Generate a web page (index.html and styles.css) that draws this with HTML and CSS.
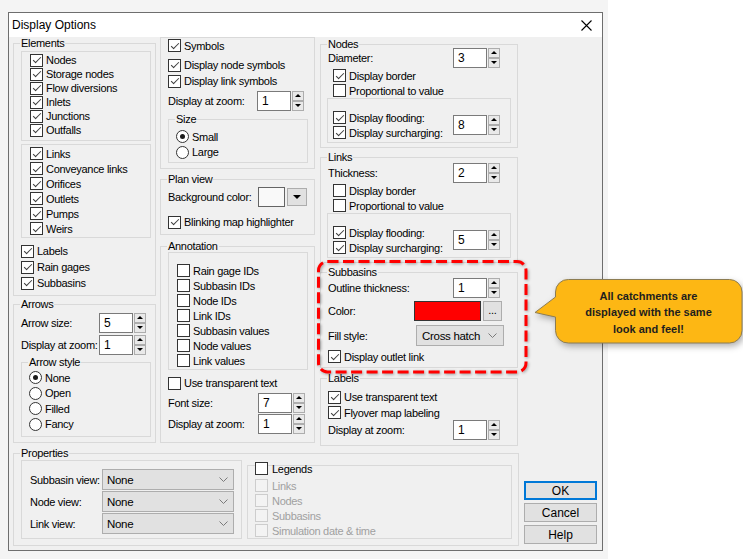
FILE: index.html
```html
<!DOCTYPE html>
<html lang="en">
<head>
    <meta charset="UTF-8">
    <meta name="viewport" content="width=device-width, initial-scale=1.0">
    <title>Display Options</title>
    <link rel="stylesheet" href="styles.css">
</head>
<body>
<div class="screen">
    <div class="window">
        <div class="titlebar">
            <span class="title">Display Options</span>
            <svg class="close" width="11" height="11" viewBox="0 0 11 11"><path d="M0.5 0.5L10.5 10.5M10.5 0.5L0.5 10.5" stroke="#000" stroke-width="1.1"/></svg>
        </div>
        <div class="dlg">
            <div class="top">
                <!-- left column -->
                <div class="col col1">
                    <fieldset class="grp elements">
                        <legend>Elements</legend>
                        <div class="gb">
                            <div class="box box-nodes">
                                <div class="ck"><span class="cb on"></span>Nodes</div>
                                <div class="ck"><span class="cb on"></span>Storage nodes</div>
                                <div class="ck"><span class="cb on"></span>Flow diversions</div>
                                <div class="ck"><span class="cb on"></span>Inlets</div>
                                <div class="ck"><span class="cb on"></span>Junctions</div>
                                <div class="ck"><span class="cb on"></span>Outfalls</div>
                            </div>
                            <div class="box box-links">
                                <div class="ck"><span class="cb on"></span>Links</div>
                                <div class="ck"><span class="cb on"></span>Conveyance links</div>
                                <div class="ck"><span class="cb on"></span>Orifices</div>
                                <div class="ck"><span class="cb on"></span>Outlets</div>
                                <div class="ck"><span class="cb on"></span>Pumps</div>
                                <div class="ck"><span class="cb on"></span>Weirs</div>
                            </div>
                            <div class="misc">
                                <div class="ck"><span class="cb on"></span>Labels</div>
                                <div class="ck"><span class="cb on"></span>Rain gages</div>
                                <div class="ck"><span class="cb on"></span>Subbasins</div>
                            </div>
                        </div>
                    </fieldset>
                    <fieldset class="grp arrows">
                        <legend>Arrows</legend>
                        <div class="gb">
                            <div class="frow"><span class="lab lab-arrow">Arrow size:</span><span class="num">5</span><span class="spin"><i class="up"></i><i class="dn"></i></span></div>
                            <div class="frow arrow-zoom"><span class="lab lab-arrow">Display at zoom:</span><span class="num">1</span><span class="spin"><i class="up"></i><i class="dn"></i></span></div>
                            <fieldset class="grp arrowstyle">
                                <legend>Arrow style</legend>
                                <div class="gb">
                                    <div class="rd"><span class="rb on"></span>None</div>
                                    <div class="rd"><span class="rb"></span>Open</div>
                                    <div class="rd"><span class="rb"></span>Filled</div>
                                    <div class="rd"><span class="rb"></span>Fancy</div>
                                </div>
                            </fieldset>
                        </div>
                    </fieldset>
                </div>

                <!-- middle column -->
                <div class="col col2">
                    <div class="box symbols">
                        <div class="ck sym1"><span class="cb on"></span>Symbols</div>
                        <div class="ck sym2"><span class="cb on"></span>Display node symbols</div>
                        <div class="ck sym3"><span class="cb on"></span>Display link symbols</div>
                        <div class="frow sym-zoom"><span class="lab lab-mid">Display at zoom:</span><span class="num">1</span><span class="spin"><i class="up"></i><i class="dn"></i></span></div>
                        <fieldset class="grp size">
                            <legend>Size</legend>
                            <div class="gb">
                                <div class="rd"><span class="rb on"></span>Small</div>
                                <div class="rd"><span class="rb"></span>Large</div>
                            </div>
                        </fieldset>
                    </div>
                    <fieldset class="grp planview">
                        <legend>Plan view</legend>
                        <div class="gb">
                            <div class="frow"><span class="lab lab-bg">Background color:</span><span class="swatch"></span><span class="ddbtn"></span></div>
                            <div class="ck blink"><span class="cb on"></span>Blinking map highlighter</div>
                        </div>
                    </fieldset>
                    <fieldset class="grp annotation">
                        <legend>Annotation</legend>
                        <div class="gb">
                            <div class="box box-annot">
                                <div class="ck"><span class="cb"></span>Rain gage IDs</div>
                                <div class="ck"><span class="cb"></span>Subbasin IDs</div>
                                <div class="ck"><span class="cb"></span>Node IDs</div>
                                <div class="ck"><span class="cb"></span>Link IDs</div>
                                <div class="ck"><span class="cb"></span>Subbasin values</div>
                                <div class="ck"><span class="cb"></span>Node values</div>
                                <div class="ck"><span class="cb"></span>Link values</div>
                            </div>
                            <div class="ck transp"><span class="cb"></span>Use transparent text</div>
                            <div class="frow font-row"><span class="lab lab-bg">Font size:</span><span class="num">7</span><span class="spin"><i class="up"></i><i class="dn"></i></span></div>
                            <div class="frow annot-zoom"><span class="lab lab-bg">Display at zoom:</span><span class="num">1</span><span class="spin"><i class="up"></i><i class="dn"></i></span></div>
                        </div>
                    </fieldset>
                </div>

                <!-- right column -->
                <div class="col col3">
                    <fieldset class="grp nodes">
                        <legend>Nodes</legend>
                        <div class="gb">
                            <div class="frow first"><span class="lab lab-right">Diameter:</span><span class="num">3</span><span class="spin"><i class="up"></i><i class="dn"></i></span></div>
                            <div class="ck indent"><span class="cb on"></span>Display border</div>
                            <div class="ck indent"><span class="cb"></span>Proportional to value</div>
                            <div class="box box-flood">
                                <div class="cks">
                                    <div class="ck"><span class="cb on"></span>Display flooding:</div>
                                    <div class="ck"><span class="cb on"></span>Display surcharging:</div>
                                </div>
                                <span class="num">8</span><span class="spin"><i class="up"></i><i class="dn"></i></span>
                            </div>
                        </div>
                    </fieldset>
                    <fieldset class="grp links">
                        <legend>Links</legend>
                        <div class="gb">
                            <div class="frow first"><span class="lab lab-right">Thickness:</span><span class="num">2</span><span class="spin"><i class="up"></i><i class="dn"></i></span></div>
                            <div class="ck indent"><span class="cb"></span>Display border</div>
                            <div class="ck indent"><span class="cb"></span>Proportional to value</div>
                            <div class="box box-flood">
                                <div class="cks">
                                    <div class="ck"><span class="cb on"></span>Display flooding:</div>
                                    <div class="ck"><span class="cb on"></span>Display surcharging:</div>
                                </div>
                                <span class="num">5</span><span class="spin"><i class="up"></i><i class="dn"></i></span>
                            </div>
                        </div>
                    </fieldset>
                    <fieldset class="grp subbasins">
                        <legend>Subbasins</legend>
                        <div class="gb">
                            <div class="frow first"><span class="lab lab-right">Outline thickness:</span><span class="num">1</span><span class="spin"><i class="up"></i><i class="dn"></i></span></div>
                            <div class="frow color-row"><span class="lab lab-color">Color:</span><span class="redbox"></span><span class="dots">...</span></div>
                            <div class="frow fill-row"><span class="lab lab-fill">Fill style:</span><span class="sel sel-fill">Cross hatch<svg class="chev" width="9" height="5" viewBox="0 0 9 5"><path d="M0.5 0.5L4.5 4.5L8.5 0.5" fill="none" stroke="#7a7a7a"/></svg></span></div>
                            <div class="ck outlet"><span class="cb on"></span>Display outlet link</div>
                        </div>
                    </fieldset>
                    <fieldset class="grp labels">
                        <legend>Labels</legend>
                        <div class="gb">
                            <div class="ck lab1"><span class="cb on"></span>Use transparent text</div>
                            <div class="ck lab2"><span class="cb on"></span>Flyover map labeling</div>
                            <div class="frow"><span class="lab lab-right">Display at zoom:</span><span class="num">1</span><span class="spin"><i class="up"></i><i class="dn"></i></span></div>
                        </div>
                    </fieldset>
                </div>
            </div>

            <div class="bottom">
                <fieldset class="grp properties">
                    <legend>Properties</legend>
                    <div class="gb">
                        <div class="box pbox">
                            <div class="prow"><span class="lab lab-prop">Subbasin view:</span><span class="sel sel-prop">None<svg class="chev" width="9" height="5" viewBox="0 0 9 5"><path d="M0.5 0.5L4.5 4.5L8.5 0.5" fill="none" stroke="#7a7a7a"/></svg></span></div>
                            <div class="prow"><span class="lab lab-prop">Node view:</span><span class="sel sel-prop">None<svg class="chev" width="9" height="5" viewBox="0 0 9 5"><path d="M0.5 0.5L4.5 4.5L8.5 0.5" fill="none" stroke="#7a7a7a"/></svg></span></div>
                            <div class="prow"><span class="lab lab-prop">Link view:</span><span class="sel sel-prop">None<svg class="chev" width="9" height="5" viewBox="0 0 9 5"><path d="M0.5 0.5L4.5 4.5L8.5 0.5" fill="none" stroke="#7a7a7a"/></svg></span></div>
                        </div>
                        <div class="box lgbox">
                            <div class="ck lg-head"><span class="cb"></span>Legends</div>
                            <div class="ck off lg-first"><span class="cb"></span>Links</div>
                            <div class="ck off"><span class="cb"></span>Nodes</div>
                            <div class="ck off"><span class="cb"></span>Subbasins</div>
                            <div class="ck off"><span class="cb"></span>Simulation date &amp; time</div>
                        </div>
                    </div>
                </fieldset>
                <div class="btns">
                    <button class="btn default">OK</button>
                    <button class="btn">Cancel</button>
                    <button class="btn">Help</button>
                </div>
            </div>
        </div>
    </div>

    <!-- annotation overlay -->
    <svg class="highlight" width="216" height="118" viewBox="0 0 216 118"><rect x="3.5" y="3.5" width="207.5" height="110.5" rx="9" fill="none" stroke="#ff0000" stroke-width="3" stroke-dasharray="11 4.5"/></svg>
    <div class="callout">
        <svg width="211" height="74" viewBox="0 0 211 74"><path d="M36.5 4.5H197.5A12.5 12.5 0 0 1 210 17V55.5A12.5 12.5 0 0 1 197.5 68H36.5A12.5 12.5 0 0 1 23.5 55.5V42L3 37.5L23.5 22V17A12.5 12.5 0 0 1 36.5 4.5Z" fill="#fdb714" stroke="#8c7c52" stroke-width="1"/></svg>
        <div class="callout-text">All catchments are<br>displayed with the same<br>look and feel!</div>
    </div>
</div>
</body>
</html>
```

FILE: styles.css
```css
* {
    box-sizing: border-box;
}
body {
    margin: 0;
    background-color: #fff;
    font-family: "Liberation Sans", Arial, sans-serif;
    font-size: 11px;
    letter-spacing: -0.3px;
    color: #000;
}
.screen {
    position: relative;
    width: 608px;
    height: 559px;
    background-color: #f4f4f4;
    padding: 12px 0 0 8px;
}
.window {
    width: 595px;
    height: 539px;
    border: 1px solid #6e6e6e;
    background-color: #f0f0f0;
}
.titlebar {
    height: 24px;
    background-color: #fff;
    display: flex;
    align-items: center;
    justify-content: space-between;
    padding: 0 10px 0 3px;
}
.title {
    font-size: 12px;
    letter-spacing: 0;
}
.dlg {
    padding-left: 4px;
}
.top {
    display: flex;
    align-items: flex-start;
}
.col {
    display: flex;
    flex-direction: column;
}
.col1 { width: 143px; }
.col2 { width: 155px; margin-left: 4px; }
.col3 { width: 198px; margin-left: 5px; }

/* group boxes */
.grp {
    margin: 0;
    padding: 0;
    border: 1px solid #d9d9d9;
    min-width: 0;
}
.grp > legend {
    padding: 0 1px;
    margin-left: 6px;
    height: 13px;
    line-height: 13px;
}
.gb {
    padding-left: 7px;
}
.box {
    border: 1px solid #d9d9d9;
}

/* checkbox rows */
.ck {
    display: flex;
    align-items: center;
    gap: 3px;
    white-space: nowrap;
    height: 15px;
}
.cb {
    position: relative;
    flex-shrink: 0;
    width: 13px;
    height: 13px;
    border: 1px solid #333;
    background-color: #fff;
}
.cb.on::after {
    content: "";
    position: absolute;
    left: 3.5px;
    top: 0.5px;
    width: 3px;
    height: 7px;
    border: solid #3c3c3c;
    border-width: 0 1.4px 1.4px 0;
    transform: rotate(45deg);
}
.ck.off {
    color: #a0a0a0;
}
.ck.off .cb {
    border-color: #cdcdcd;
    background-color: #f3f3f3;
}
.rd {
    display: flex;
    align-items: center;
    gap: 3px;
    height: 15.5px;
}
.rb {
    position: relative;
    width: 13px;
    height: 13px;
    border: 1px solid #333;
    border-radius: 50%;
    background-color: #fff;
}
.rb.on::after {
    content: "";
    position: absolute;
    left: 3px;
    top: 3px;
    width: 5px;
    height: 5px;
    border-radius: 50%;
    background-color: #1a1a1a;
}

/* field rows */
.frow {
    display: flex;
    align-items: center;
    height: 20px;
}
.lab {
    flex-shrink: 0;
    white-space: nowrap;
}
.lab-arrow { width: 78px; }
.lab-mid { width: 89px; }
.lab-bg { width: 90px; }
.lab-right { width: 125px; }
.lab-color { width: 86px; }
.lab-fill { width: 88px; }
.lab-prop { width: 72px; }
.num {
    width: 34px;
    height: 20px;
    border: 1px solid #7a7a7a;
    background-color: #fff;
    font-size: 12px;
    line-height: 18px;
    padding-left: 4px;
    letter-spacing: 0;
}
.spin {
    display: flex;
    flex-direction: column;
    margin-left: 1px;
}
.spin i {
    display: block;
    position: relative;
    width: 12px;
    height: 10px;
    border: 1px solid #adadad;
    background-color: #e9e9e9;
}
.spin i::after {
    content: "";
    position: absolute;
    left: 2px;
    top: 2px;
    border-left: 3px solid transparent;
    border-right: 3px solid transparent;
}
.spin .up::after { border-bottom: 3px solid #000; }
.spin .dn::after { border-top: 3px solid #000; }

/* elements group */
.elements .gb { padding: 1px 4px 4px 7px; }
.box-nodes { padding: 1px 0 3px 8px; }
.box-nodes .ck { height: 14px; }
.box-links { margin-top: 3px; padding: 1px 0 1px 8px; }
.misc { margin-top: 5px; }
.misc .ck { height: 16px; }

/* arrows group */
.arrows { margin-top: 2px; }
.arrows .gb { padding: 2px 4px 5px 7px; }
.arrow-zoom { margin-top: 2px; }
.arrowstyle { margin-top: 1px; }
.arrowstyle .gb { padding: 1px 0 4px 7px; }

/* middle column */
.symbols { padding: 0 6px 5px 7px; }
.sym1 { height: 15px; }
.sym2 { margin-top: 4px; height: 16px; }
.sym3 { height: 16px; }
.sym-zoom { margin-top: 2px; }
.size { margin-top: 2px; }
.size .gb { padding: 3px 0 2px 7px; }
.planview { margin-top: 4px; }
.planview .gb { padding: 1px 0 4px 7px; }
.swatch {
    width: 27px;
    height: 20px;
    border: 1px solid #646464;
    background-color: #f9f9f9;
}
.ddbtn {
    position: relative;
    width: 20px;
    height: 18px;
    margin-left: 2px;
    border: 1px solid #adadad;
    background-color: #e1e1e1;
}
.ddbtn::after {
    content: "";
    position: absolute;
    left: 5px;
    top: 6px;
    border-left: 4px solid transparent;
    border-right: 4px solid transparent;
    border-top: 4px solid #000;
}
.blink { margin-top: 7px; height: 16px; }
.annotation { margin-top: 5px; }
.annotation .gb { padding: 0 6px 8px 7px; }
.box-annot { margin-top: -1px; padding: 10px 0 1px 8px; }
.transp { margin-top: 5px; height: 16px; }
.font-row { margin-top: 2px; }
.annot-zoom { margin-top: 1px; }

/* right column */
.nodes { margin-top: 1px; }
.col3 .gb { padding: 0 6px 4px 7px; }
.col3 .frow.first { margin-top: -3px; }
.links .frow.first,
.subbasins .frow.first { margin-top: -1px; }
.ck.indent { padding-left: 5px; }
.box-flood {
    display: flex;
    align-items: center;
    margin-left: -1px;
    padding: 11px 0 2px 5px;
}
.cks { width: 120px; }
.links { margin-top: 3px; }
.subbasins { margin-top: 3px; }
.subbasins .gb { padding-bottom: 3px; }
.color-row { margin-top: 3px; }
.redbox {
    width: 67px;
    height: 20px;
    border: 1px solid #333;
    background-color: #ff0000;
}
.dots {
    width: 19px;
    height: 20px;
    margin-left: 2px;
    border: 1px solid #adadad;
    background-color: #e1e1e1;
    text-align: center;
    line-height: 16px;
    font-size: 11px;
}
.fill-row { margin-top: 4px; height: 21px; }
.sel {
    display: flex;
    align-items: center;
    justify-content: space-between;
    height: 21px;
    border: 1px solid #adadad;
    background-color: #e1e1e1;
    font-size: 11.5px;
}
.sel-fill { width: 88px; padding: 0 6px 0 5px; }
.sel-prop { width: 132px; padding: 0 5px 0 4px; }
.outlet { margin-top: 3px; }
.labels { margin-top: 4px; }
.labels .gb { padding-bottom: 5px; }
.lab1 { margin-top: 4px; height: 16px; }

/* bottom row */
.bottom {
    display: flex;
    margin-top: 1px;
}
.properties { width: 506px; }
.properties .gb {
    display: flex;
    align-items: flex-start;
    padding: 0 5px 6px 7px;
}
.pbox {
    width: 221px;
    padding: 8px 0 4px 8px;
}
.prow {
    display: flex;
    align-items: center;
    height: 21px;
}
.prow + .prow { margin-top: 1px; }
.lgbox {
    width: 265px;
    margin-left: 5px;
    margin-top: 5px;
    padding-left: 7px;
}
.lg-head { margin-top: -4px; height: 13px; gap: 4px; }
.lg-first { margin-top: 3px; }
.lgbox .off { gap: 4px; }
.btns {
    display: flex;
    flex-direction: column;
    gap: 3px;
    width: 73px;
    margin-left: 5px;
    align-self: flex-end;
    margin-bottom: 2px;
}
.btn {
    height: 19px;
    padding: 0;
    border: 1px solid #adadad;
    background-color: #e1e1e1;
    font-family: "Liberation Sans", Arial, sans-serif;
    font-size: 12px;
    color: #000;
}
.btn.default {
    border: 2px solid #0078d7;
}

/* overlay markup */
.highlight {
    position: absolute;
    left: 315px;
    top: 258px;
    filter: drop-shadow(1px 1px 1.5px rgba(0, 0, 0, 0.35));
}
.callout {
    position: absolute;
    left: 532px;
    top: 275px;
    width: 211px;
    height: 74px;
}
.callout svg {
    display: block;
    filter: drop-shadow(2px 3px 3px rgba(0, 0, 0, 0.3));
}
.callout-text {
    position: absolute;
    left: 23px;
    top: 12.75px;
    width: 187px;
    text-align: center;
    font-weight: bold;
    font-size: 11px;
    line-height: 16.5px;
    letter-spacing: 0;
    color: #1e1e1e;
}
```
